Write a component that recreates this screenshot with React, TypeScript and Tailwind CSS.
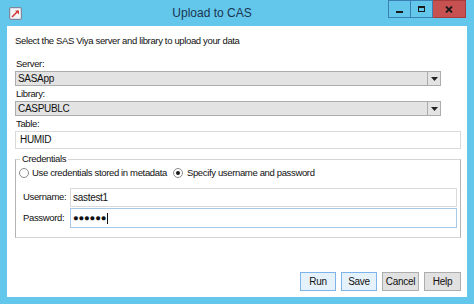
import React from 'react';

const font = { fontFamily: '"Liberation Sans", Arial, sans-serif' };

const Combo = ({ value }: { value: string }) => (
   <div className="flex h-[15px] mr-[20px] border border-[#acacac] bg-[#e3e3e3]">
      <div className="flex-1 pl-[2px] leading-[13px] text-[10px] tracking-[-0.3px]">{value}</div>
      <div className="w-[13px] border-l border-[#acacac] flex items-center justify-center">
         <svg width="7" height="4" viewBox="0 0 7 4">
            <path d="M0 0h7L3.5 4z" fill="#222" />
         </svg>
      </div>
   </div>
);

const Label = ({ children }: { children: React.ReactNode }) => (
   <div className="leading-[12px] pl-[1px]">{children}</div>
);

const Radio = ({ checked }: { checked?: boolean }) => (
   <div className="w-[10px] h-[10px] rounded-full border border-[#8a8a8a] bg-white flex items-center justify-center">
      {checked && <div className="w-[4px] h-[4px] rounded-full bg-[#1a1a1a]" />}
   </div>
);

const DlgButton = ({ label, accent }: { label: string; accent?: boolean }) => (
   <button
      className={
         accent
            ? 'w-[36px] h-[19px] border border-[#7eb4ea] bg-[#e5f1fb] text-[10px] leading-[17px] tracking-[-0.3px]'
            : 'w-[37px] h-[19px] border border-[#adadad] bg-[#e1e1e1] text-[10px] leading-[17px] tracking-[-0.3px]'
      }
   >
      {label}
   </button>
);

export default function App() {
   return (
      <div className="w-[474px] h-[304px] bg-[#63c7ec] flex flex-col text-[#111]" style={font}>
         {/* title bar */}
         <div className="h-[26px] flex relative">
            <div className="pl-[9px] pt-[7px]">
               <svg width="13" height="13" viewBox="0 0 13 13">
                  <rect x="0.5" y="0.5" width="12" height="12" rx="1.5" fill="#d9dde6" stroke="#7d8797" />
                  <rect x="2" y="2" width="9" height="9" fill="#f4f4f6" />
                  <path d="M3 10L9 4" stroke="#d33b3b" strokeWidth="1.6" />
                  <path d="M6 3.5h4v4z" fill="#d33b3b" />
               </svg>
            </div>
            <div className="flex-1 text-center text-[12px] leading-[26px] text-[#1b3550] pl-[14px]">
               Upload to CAS
            </div>
            <div className="flex h-[18px] mr-[8px]">
               <div className="w-[23px] border border-[#3a80b4] bg-[#63c7ec] flex items-end justify-center pb-[4px]">
                  <div className="w-[7px] h-[2px] bg-[#1a1a1a]" />
               </div>
               <div className="w-[22px] border border-l-0 border-[#3a80b4] bg-[#63c7ec] flex items-center justify-center">
                  <div className="w-[7px] h-[6px] border-[1.5px] border-t-2 border-[#1a1a1a]" />
               </div>
               <div className="w-[33px] bg-[#c75050] flex items-center justify-center border border-l-0 border-[#a73c3c]">
                  <svg width="8" height="7" viewBox="0 0 8 7">
                     <path d="M1 0.5L7 6.5M7 0.5L1 6.5" stroke="#1a1a1a" strokeWidth="1.8" />
                  </svg>
               </div>
            </div>
         </div>

         {/* client area */}
         <div className="flex-1 mx-[7px] mb-[7px] bg-white pl-[8px] pr-[6px] text-[9.5px] tracking-[-0.35px] flex flex-col">
            <div className="leading-[12px] mt-[9px]">
               Select the SAS Viya server and library to upload your data
            </div>

            <div className="mt-[11px]">
               <Label>Server:</Label>
            </div>
            <div className="mt-[1px]">
               <Combo value="SASApp" />
            </div>
            <div className="mt-[2px]">
               <Label>Library:</Label>
            </div>
            <div className="mt-[1px]">
               <Combo value="CASPUBLC" />
            </div>
            <div className="mt-[2px]">
               <Label>Table:</Label>
            </div>
            <div className="mt-[1px] h-[18px] border border-[#dadada] pl-[4px] leading-[16px] text-[10px] tracking-[-0.3px]">
               HUMID
            </div>

            {/* credentials group */}
            <div className="mt-[10px] h-[79px] border border-[#d5d5d5] border-l-[#b4b4b4] border-r-[#b4b4b4]">
               <div className="-mt-[7px] ml-[4px] w-fit bg-white px-[2px] leading-[12px]">Credentials</div>
               <div className="mt-[2px] h-[12px] flex items-center pl-[3px]">
                  <Radio />
                  <span className="ml-[3px]">Use credentials stored in metadata</span>
                  <div className="ml-[6px]">
                     <Radio checked />
                  </div>
                  <span className="ml-[4px]">Specify username and password</span>
               </div>
               <div className="mt-[9px] flex items-center pl-[7px] pr-[3px]">
                  <div className="w-[47px]">Username:</div>
                  <div className="flex-1 h-[19px] border border-[#dadada] pl-[2px] leading-[17px] text-[10px] tracking-[-0.3px]">
                     sastest1
                  </div>
               </div>
               <div className="mt-[1px] flex items-center pl-[7px] pr-[3px]">
                  <div className="w-[47px]">Password:</div>
                  <div className="flex-1 h-[20px] border border-[#a9c9ea] pl-[2px] flex items-center">
                     <span className="text-[9.5px] tracking-[-0.2px] leading-[10px]">●●●●●●</span>
                     <div className="w-[1px] h-[11px] bg-[#111] ml-[1px]" />
                  </div>
               </div>
            </div>

            <div className="mt-[34px] flex justify-end gap-[5px]">
               <DlgButton label="Run" accent />
               <DlgButton label="Save" accent />
               <DlgButton label="Cancel" />
               <DlgButton label="Help" />
            </div>
         </div>
      </div>
   );
}
